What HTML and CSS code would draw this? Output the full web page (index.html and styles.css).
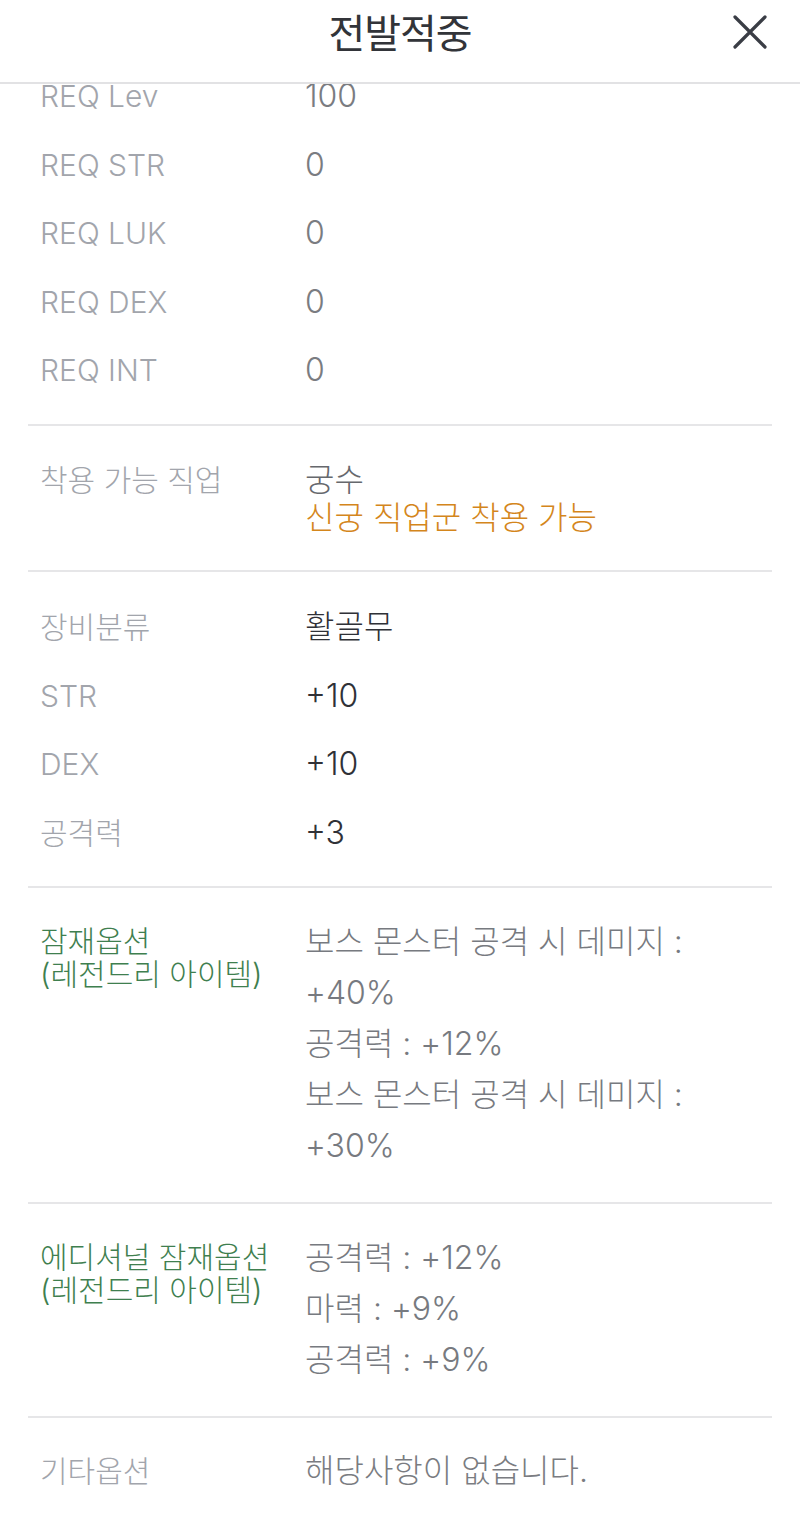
FILE: index.html
```html
<!DOCTYPE html>
<html lang="ko">
<head>
<meta charset="utf-8">
<title>전발적중</title>
<link rel="stylesheet" href="styles.css">
</head>
<body>
<header class="topbar">
  <h1 class="title">전발적중</h1>
  <button class="close" aria-label="닫기">
    <svg width="34" height="34" viewBox="0 0 34 34"><path d="M2 2 L32 32 M32 2 L2 32" stroke="#3a3d45" stroke-width="3.2" stroke-linecap="round" fill="none"/></svg>
  </button>
</header>
<main class="sheet">
  <section class="group stats req">
    <div class="row"><span class="label en">REQ Lev</span><span class="value en muted">100</span></div>
    <div class="row"><span class="label en">REQ STR</span><span class="value en muted">0</span></div>
    <div class="row"><span class="label en">REQ LUK</span><span class="value en muted">0</span></div>
    <div class="row"><span class="label en">REQ DEX</span><span class="value en muted">0</span></div>
    <div class="row"><span class="label en">REQ INT</span><span class="value en muted">0</span></div>
  </section>
  <section class="group job">
    <div class="row"><span class="label">착용 가능 직업</span>
      <div class="value stack"><span class="mid">궁수</span><span class="orange">신궁 직업군 착용 가능</span></div>
    </div>
  </section>
  <section class="group stats equip">
    <div class="row"><span class="label">장비분류</span><span class="value dark">활골무</span></div>
    <div class="row"><span class="label en">STR</span><span class="value en dark">+10</span></div>
    <div class="row"><span class="label en">DEX</span><span class="value en dark">+10</span></div>
    <div class="row"><span class="label">공격력</span><span class="value en dark">+3</span></div>
  </section>
  <section class="group potential">
    <div class="row"><span class="label green">잠재옵션<br>(레전드리 아이템)</span>
      <div class="value opts">
        <p>보스 몬스터 공격 시 데미지 : +40%</p>
        <p>공격력 : +12%</p>
        <p>보스 몬스터 공격 시 데미지 : +30%</p>
      </div>
    </div>
  </section>
  <section class="group potential">
    <div class="row"><span class="label green">에디셔널 잠재옵션<br>(레전드리 아이템)</span>
      <div class="value opts">
        <p>공격력 : +12%</p>
        <p>마력 : +9%</p>
        <p>공격력 : +9%</p>
      </div>
    </div>
  </section>
  <section class="group last">
    <div class="row"><span class="label">기타옵션</span><span class="value muted">해당사항이 없습니다.</span></div>
  </section>
</main>
</body>
</html>
```

FILE: styles.css
```css
* { box-sizing: border-box; }
html, body { margin: 0; padding: 0; background: #fff; }
body {
  font-family: Inter, "Noto Sans CJK KR", sans-serif;
  font-weight: 300;
  font-size: 30px;
  color: #777a80;
  width: 800px;
}
.topbar {
  position: fixed;
  top: 0; left: 0;
  width: 800px;
  height: 84px;
  background: #fff;
  border-bottom: 2px solid #e2e2e4;
  display: flex;
  align-items: center;
  justify-content: center;
  z-index: 10;
}
.title {
  margin: 0 0 21px;
  font-family: "Noto Sans CJK KR", sans-serif;
  font-weight: 400;
  font-size: 40px;
  line-height: 48px;
  letter-spacing: -1px;
  color: #323439;
}
.close {
  position: absolute;
  right: 33px;
  top: 15px;
  width: 34px; height: 34px;
  padding: 0; border: 0; background: none;
  display: block;
}
.close svg { display: block; }
.sheet {
  padding: 41px 28px 0;
}
.group {
  border-bottom: 2px solid #e6e6e8;
  padding: 36px 0 35px;
  display: flex;
  flex-direction: column;
}
.group.job { padding: 35px 0 33px; }
.group.equip { padding: 36px 0 34px; }
.group.last { border-bottom: 0; padding-top: 34px; }
.stats { gap: 30.5px; }
.row {
  display: grid;
  grid-template-columns: 265px 1fr;
  align-items: start;
  padding-left: 12px;
  line-height: 38px;
}
.label { color: #a2a5ac; font-size: 30px; }
.value { color: #777a80; font-size: 32px; }
.muted { color: #7a7c81; }
.mid { color: #66686d; }
.dark { color: #2f3137; }
.orange { color: #d4861c; }
.green { color: #3f7f4f; line-height: 33px; padding-top: 9px; }
.stack { display: flex; flex-direction: column; }
.potential { padding: 28px 0 31px; }
.opts { line-height: 51px; }
.opts p { margin: 0; }
```
